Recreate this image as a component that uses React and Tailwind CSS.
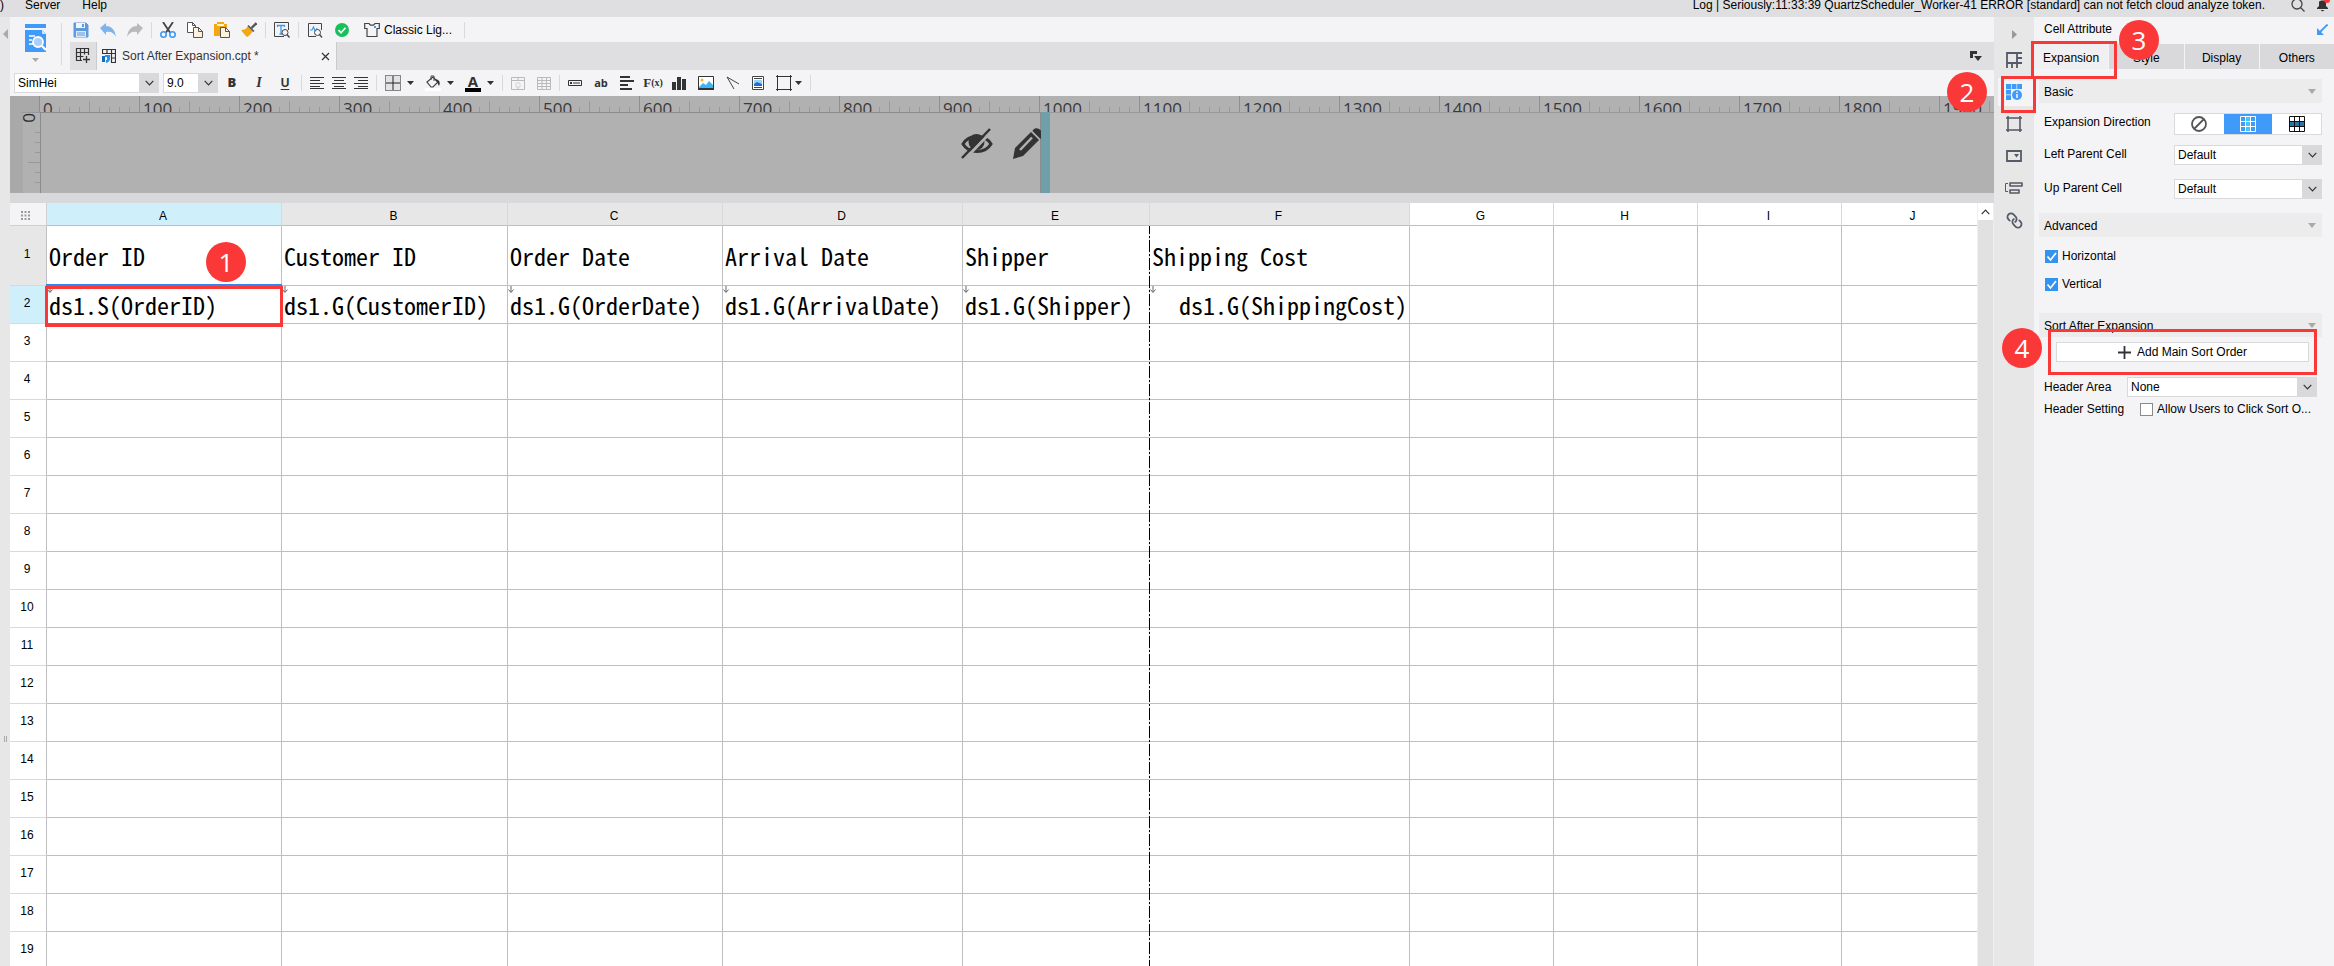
import React, { useState } from 'react';
import { Link as LinkIcon } from 'lucide-react';

const COLUMNS = [
  { name: 'A', width: 235, title: 'Order ID', field: 'ds1.S(OrderID)' },
  { name: 'B', width: 226, title: 'Customer ID', field: 'ds1.G(CustomerID)' },
  { name: 'C', width: 215, title: 'Order Date', field: 'ds1.G(OrderDate)' },
  { name: 'D', width: 240, title: 'Arrival Date', field: 'ds1.G(ArrivalDate)' },
  { name: 'E', width: 187, title: 'Shipper', field: 'ds1.G(Shipper)' },
  { name: 'F', width: 260, title: 'Shipping Cost', field: 'ds1.G(ShippingCost)', alignRight: true },
  { name: 'G', width: 144 },
  { name: 'H', width: 144 },
  { name: 'I', width: 144 },
  { name: 'J', width: 144 },
];

const EMPTY_ROWS = Array.from({ length: 17 }, (_, i) => i + 3);
const RULER_MARKS = Array.from({ length: 20 }, (_, i) => i * 100);

/* ---------- small shared pieces ---------- */

const Icon = ({ w = 16, h = 16, children, className = '' }) => (
  <svg width={w} height={h} viewBox={`0 0 ${w} ${h}`} fill="none" className={`shrink-0 ${className}`} aria-hidden="true">
    {children}
  </svg>
);

const ToolButton = ({ label, children, className = '' }) => (
  <button type="button" aria-label={label} className={`flex shrink-0 items-center justify-center ${className}`}>
    {children}
  </button>
);

const Separator = ({ className = 'mx-2' }) => <span className={`h-4 w-px shrink-0 bg-[#d9d9dc] ${className}`} />;

const Caret = ({ color = '#333', className = '' }) => (
  <Icon w={7} h={4} className={className}>
    <path d="M0 0h7L3.500 4z" fill={color} />
  </Icon>
);

const Select = ({ id, label, options, className = '' }) => (
  <div className={`relative flex h-5 ${className}`}>
    <select
      id={id}
      aria-label={label}
      className="h-5 w-full appearance-none border border-[#d9d9dc] bg-white pl-[3px] pr-5 text-xs leading-4 text-black outline-none"
    >
      {options.map((o) => (
        <option key={o}>{o}</option>
      ))}
    </select>
    <span className="pointer-events-none absolute inset-y-0 right-0 flex w-5 items-center justify-center bg-[#d9d9dc]">
      <Icon w={9} h={6}>
        <path d="M.7 .8l3.800 4 3.800-4" stroke="#333" strokeWidth="1.200" />
      </Icon>
    </span>
  </div>
);

const Marker = ({ children, className }) => (
  <span
    className={`absolute z-20 flex size-10 items-center justify-center rounded-full bg-[#fb3838] font-['Open_Sans',sans-serif] text-[26px] leading-none text-white ${className}`}
  >
    {children}
  </span>
);

const Highlight = ({ className }) => (
  <span className={`pointer-events-none absolute z-10 border-3 border-[#fb3838] ${className}`} />
);

/* ---------- top ---------- */

const MenuBar = () => (
  <header className="flex h-[17px] shrink-0 items-start overflow-hidden bg-[#dfdfe1] leading-[10px]">
    <span className="w-[25px]">)</span>
    <nav className="flex gap-[22px]">
      <button type="button">Server</button>
      <button type="button">Help</button>
    </nav>
    <div className="ml-auto flex items-start pr-1">
      <span className="mr-[26px] whitespace-nowrap">
        Log | Seriously:11:33:39 QuartzScheduler_Worker-41 ERROR [standard] can not fetch cloud analyze token.
      </span>
      <button type="button" aria-label="Search" className="mr-3">
        <Icon w={14} h={12}>
          <circle cx="6" cy="4" r="5" stroke="#444" strokeWidth="1.300" />
          <path d="M9.500 7.500l4 4" stroke="#444" strokeWidth="1.300" />
        </Icon>
      </button>
      <button type="button" aria-label="Notifications">
        <Icon w={13} h={12}>
          <path d="M0 9V8l2-2V2c0-2 7-2 7 0v4l2 2v1zM3.500 10h4l-2 1.500z" fill="#333" />
          <circle cx="10" cy="0" r="3" fill="#f33" />
        </Icon>
      </button>
    </div>
  </header>
);

const QuickTools = () => (
  <div className="flex h-[25px] items-center pl-[11px]">
    <div className="flex items-center gap-[11px]">
      <ToolButton label="Save">
        <Icon>
          <path d="M1 1h12l2 2v12H1z" fill="#5f9bdc" stroke="#5f9bdc" strokeLinejoin="round" />
          <path d="M3 1h9v5H3z" fill="#f4f4f7" />
          <path d="M9 2h2v3H9z" fill="#5f9bdc" />
          <path d="M3 9h10v6H3z" fill="#dbe9f8" />
          <path d="M4 11h8M4 13h8" stroke="#5f9bdc" />
        </Icon>
      </ToolButton>
      <ToolButton label="Undo">
        <Icon>
          <path d="M0 6l6-5v3c6 0 9 4 10 11-2-4-5-6-10-5v3z" fill="#7fb3ec" />
        </Icon>
      </ToolButton>
      <ToolButton label="Redo">
        <Icon>
          <path d="M16 6l-6-5v3C4 4 1 8 0 15c2-4 5-6 10-5v3z" fill="#b9b9bb" />
        </Icon>
      </ToolButton>
    </div>
    <Separator />
    <div className="flex items-center gap-[11px]">
      <ToolButton label="Cut">
        <Icon>
          <path d="M3 0l7 10.500M13 0L6 10.500" stroke="#444" strokeWidth="1.800" />
          <circle cx="3.500" cy="12.500" r="2.700" stroke="#3f9af0" strokeWidth="1.600" />
          <circle cx="12.500" cy="12.500" r="2.700" stroke="#3f9af0" strokeWidth="1.600" />
        </Icon>
      </ToolButton>
      <ToolButton label="Copy">
        <Icon>
          <path d="M.5 .5h5l3 3v7h-8z" fill="#fff" stroke="#555" />
          <path d="M5.500 .5v3h3" stroke="#555" />
          <path d="M6.500 5.500h5l4 4v6h-9z" fill="#fdf3dc" stroke="#555" />
          <path d="M11.500 5.500v4h4" stroke="#555" />
        </Icon>
      </ToolButton>
      <ToolButton label="Paste">
        <Icon>
          <path d="M0 2h3V0h7v2h3v12H0z" fill="#f3a80e" />
          <path d="M3 2h7v2H3z" fill="#fff3d4" />
          <path d="M6.500 5.500h5l4 4v6h-9z" fill="#fdf3dc" stroke="#555" />
          <path d="M11.500 5.500v4h4" stroke="#555" />
        </Icon>
      </ToolButton>
      <ToolButton label="Format painter">
        <Icon>
          <path d="M15.500 1L10.500 6" stroke="#555" strokeWidth="2.400" />
          <path d="M0 8c3 0 5-1 7-4l5 5c-2 3-4 5-6 6-1-1-4-4-6-7z" fill="#f3a80e" />
          <path d="M7 3.500l6 6" stroke="#555" strokeWidth="1.500" />
        </Icon>
      </ToolButton>
    </div>
    <Separator />
    <ToolButton label="Find text">
      <Icon>
        <path d="M10 14.500H.5v-14h14V8" stroke="#444" />
        <path d="M3.500 5V3.500h7V5M7 4v8M5.500 12h3" stroke="#3f9af0" strokeWidth="1.300" />
        <circle cx="11" cy="10.500" r="3" fill="#f4f4f7" stroke="#444" />
        <path d="M13 12.500l2.500 3" stroke="#444" strokeWidth="1.300" />
      </Icon>
    </ToolButton>
    <Separator />
    <div className="flex items-center gap-[11px]">
      <ToolButton label="Performance">
        <Icon>
          <path d="M9 14.500H1.500v-13h13V8" stroke="#444" />
          <path d="M3 8h2l1.500-3 2 5L10 6" stroke="#3f9af0" strokeWidth="1.200" />
          <circle cx="10.500" cy="10.500" r="3" fill="#f4f4f7" stroke="#444" />
          <path d="M12.500 12.500l2.500 3" stroke="#444" strokeWidth="1.300" />
        </Icon>
      </ToolButton>
      <ToolButton label="Check">
        <Icon>
          <circle cx="8" cy="8" r="7" fill="#16c15c" />
          <path d="M4.500 8.200l2.500 2.500 4.500-5" stroke="#fff" strokeWidth="1.700" />
        </Icon>
      </ToolButton>
      <button type="button" className="flex items-center gap-1 whitespace-nowrap pl-[3px]">
        <Icon>
          <path d="M.7 1.500h4.300l1.500 1.700h3L11 1.500h4.300v5h-2.300v8H3v-8H.7z" stroke="#444" strokeWidth="1.200" />
          <path d="M10 4h2v2h-2z" fill="#3f9af0" />
        </Icon>
        Classic Lig...
      </button>
    </div>
    <Separator className="mx-3" />
  </div>
);

const FileTabs = () => (
  <div className="ml-2 flex h-7 items-stretch bg-[#dfdfe1]">
    <ToolButton label="New sheet" className="w-[26px]">
      <Icon>
        <path d="M7 12.500H1.500v-12h12V7M1.500 4.500h12M1.500 8.500h7M5.500 .5v12M9.500 .5v6" stroke="#333" strokeWidth="1.200" />
        <path d="M11.500 8v7M8 11.500h7" stroke="#333" strokeWidth="1.300" />
      </Icon>
    </ToolButton>
    <div className="flex w-[241px] items-center border-x border-[#cbcbcd] bg-[#f4f4f7] pl-[5px] pr-[5px] text-[#333]">
      <Icon w={14} h={14}>
        <path d="M.5 5V.5h13v13H9M.5 4.500h13M9 9h4.500M5 .5v4M9.500 .5v13" stroke="#333" strokeWidth="1.200" />
        <path d="M0 7h3v6H0z" fill="#1769b5" />
        <path d="M3 6h5v3c0 3-1 4-4 5v-3h1V8H3z" fill="#2f8fe0" />
      </Icon>
      <span className="ml-[6px] whitespace-nowrap">Sort After Expansion.cpt *</span>
      <ToolButton label="Close tab" className="ml-auto size-3">
        <Icon w={9} h={9}>
          <path d="M1 1l7 7M8 1L1 8" stroke="#333" strokeWidth="1.200" />
        </Icon>
      </ToolButton>
    </div>
    <ToolButton label="Tab list" className="ml-auto mr-3">
      <Icon w={12} h={10}>
        <path d="M0 0h7v3H3v4H0z" fill="#333" />
        <path d="M4 5h8l-4 5z" fill="#333" />
      </Icon>
    </ToolButton>
  </div>
);

const FormatBar = () => (
  <div className="flex h-[26px] shrink-0 items-center pl-1">
    <Select id="font" label="Font" options={['SimHei']} className="w-[145px]" />
    <Select id="size" label="Font size" options={['9.0']} className="ml-1 w-[55px]" />
    <ToolButton label="Bold" className="ml-[6px] w-4 font-['Open_Sans',sans-serif] text-[13px] font-extrabold text-[#333]">B</ToolButton>
    <ToolButton label="Italic" className="ml-[11px] w-4 font-['Liberation_Serif',serif] text-sm font-bold italic text-[#333]">I</ToolButton>
    <ToolButton label="Underline" className="ml-[10px] w-4 text-xs font-bold text-[#333] underline underline-offset-2">U</ToolButton>
    <Separator />
    <div className="flex gap-2">
      <ToolButton label="Align left">
        <Icon w={14} h={12}>
          <path d="M0 .5h14M0 3.500h10M0 6.500h14M0 9.500h10M0 11.500h14" stroke="#333" />
        </Icon>
      </ToolButton>
      <ToolButton label="Align center">
        <Icon w={14} h={12}>
          <path d="M0 .5h14M2 3.500h10M0 6.500h14M2 9.500h10M0 11.500h14" stroke="#333" />
        </Icon>
      </ToolButton>
      <ToolButton label="Align right">
        <Icon w={14} h={12}>
          <path d="M0 .5h14M4 3.500h10M0 6.500h14M4 9.500h10M0 11.500h14" stroke="#333" />
        </Icon>
      </ToolButton>
    </div>
    <Separator />
    <div className="flex gap-[11px]">
      <ToolButton label="Borders" className="gap-[6px]">
        <Icon>
          <path d="M.5 .5h15v15H.5z" fill="#e3e3e6" stroke="#222" strokeDasharray="1 1" />
          <path d="M8 1v14M1 8h14" stroke="#222" />
        </Icon>
        <Caret />
      </ToolButton>
      <ToolButton label="Fill color" className="gap-[6px]">
        <Icon>
          <path d="M2 7l6-5 5 5-5 5H6z" stroke="#444" strokeWidth="1.200" fill="#f4f4f7" />
          <path d="M6 5V1h3v5" stroke="#444" />
          <path d="M9 4c5 0 7 3 5 7-1-1-1-3-2-4z" fill="#333" />
          <path d="M0 13h16v3H0z" fill="#fff" />
        </Icon>
        <Caret />
      </ToolButton>
      <ToolButton label="Font color" className="gap-[6px]">
        <span className="flex w-4 flex-col items-center border-b-4 border-black font-['Open_Sans',sans-serif] text-[15px] font-bold leading-[13px] text-[#333]">A</span>
        <Caret />
      </ToolButton>
    </div>
    <Separator />
    <div className="flex gap-3">
      <ToolButton label="Merge cells">
        <Icon w={14} h={13}>
          <path d="M.5 .5h13v12H.5zM.5 3.500h13M7 .5v3M7 10v3" stroke="#b9b9bb" />
          <path d="M5 6h4v4H5z" stroke="#d4d4d6" />
        </Icon>
      </ToolButton>
      <ToolButton label="Unmerge cells">
        <Icon w={14} h={13}>
          <path d="M.5 .5h13v12H.5zM.5 3.500h13M.5 6.500h13M.5 9.500h13M5 .5v12M9.500 .5v12" stroke="#b9b9bb" />
        </Icon>
      </ToolButton>
    </div>
    <Separator />
    <div className="flex items-center gap-3">
      <ToolButton label="Text field">
        <Icon w={14} h={6}>
          <path d="M.5 .5h13v5H.5z" stroke="#333" />
          <path d="M2 2h2v2H2z" fill="#333" />
          <path d="M5 3h7" stroke="#333" />
        </Icon>
      </ToolButton>
      <ToolButton label="Insert text" className="w-[14px] font-['Open_Sans',sans-serif] text-[11px] font-bold text-[#333]">ab</ToolButton>
      <ToolButton label="Rich text">
        <Icon w={14} h={14}>
          <path d="M0 1h10M0 5h14M0 9h8M0 13h12" stroke="#333" strokeWidth="2" />
        </Icon>
      </ToolButton>
      <ToolButton label="Insert formula" className="w-[14px] font-['Liberation_Serif',serif] text-[13px] font-bold text-[#333]">
        F<span className="text-[10px]">(x)</span>
      </ToolButton>
      <ToolButton label="Insert chart">
        <Icon w={14} h={14}>
          <path d="M0 6h4v8H0zM5 1h4v13H5zM10 3h4v11h-4z" fill="#333" />
        </Icon>
      </ToolButton>
      <ToolButton label="Insert picture">
        <Icon w={16} h={14}>
          <path d="M.5 .5h15v13H.5z" fill="#fff" stroke="#333" />
          <circle cx="4" cy="4" r="1.500" fill="#f9b632" />
          <path d="M1 11l4-4 3 2 3-4 4 4v3H1z" fill="#3db5f2" />
          <path d="M0 13h16" stroke="#333" strokeWidth="2" />
        </Icon>
      </ToolButton>
      <ToolButton label="Slash header">
        <Icon w={14} h={14}>
          <path d="M1 1l12 7M1 1l7 12" stroke="#444" />
        </Icon>
      </ToolButton>
      <ToolButton label="Sub report">
        <Icon w={12} h={14}>
          <path d="M.5 .5h11v13H.5z" fill="#fff" stroke="#444" />
          <path d="M2 2.500h8M2 11.500h8" stroke="#444" />
          <path d="M2 4h8v6H2z" fill="#9bd2fa" />
          <path d="M2 10V8l3-2 5 2v2z" fill="#1b70c9" />
        </Icon>
      </ToolButton>
      <ToolButton label="Widget" className="gap-[3px]">
        <Icon>
          <path d="M1.500 0v16M14.500 0v16M0 1.500h16M0 14.500h16" stroke="#333" />
        </Icon>
        <Caret />
      </ToolButton>
    </div>
    <Separator className="mx-2" />
  </div>
);

/* ---------- canvas ---------- */

const HorizontalRuler = () => (
  <div className="flex h-4 overflow-hidden bg-[#b1b1b1]">
    <div className="w-[29px] shrink-0 bg-[#a9a9a9]" />
    {RULER_MARKS.map((mark) => (
      <div key={mark} className="relative h-4 w-[100px] shrink-0 border-l border-[#8f8f8f]">
        <svg width="99" height="16" className="absolute" aria-hidden="true">
          <path
            d="M19.500 11v5M29.500 11v5M39.500 11v5M49.500 5v11M59.500 11v5M69.500 11v5M79.500 11v5M89.500 11v5"
            stroke="#999"
          />
        </svg>
        <span className="relative ml-[3px] block h-4 w-fit overflow-hidden bg-[#b1b1b1] font-['Open_Sans',sans-serif] text-[17px] leading-[25px] text-[#3a3a3a]">
          {mark}
        </span>
      </div>
    ))}
  </div>
);

const PreviewPane = () => (
  <section className="shrink-0 bg-[#b1b1b1]">
    <HorizontalRuler />
    <div className="flex h-[81px]">
      <div className="relative w-[31px] shrink-0 border-r border-[#8b8b8b] bg-gradient-to-r from-[#a9a9a9] from-45% to-[#b1b1b1] to-45%">
        <svg width="30" height="81" aria-hidden="true">
          <path
            d="M12 .5h18M25 20.500h5M25 30.500h5M25 40.500h5M18 50.500h12M25 60.500h5M25 70.500h5"
            stroke="#999"
          />
          <text x="1" y="-13" transform="rotate(90)" fontFamily="Open Sans" fontSize="17" fill="#2c2c2c">0</text>
        </svg>
      </div>
      <div className="flex w-[1000px] shrink-0 items-start justify-end gap-5 border-r border-t border-[#8b8b8b] pt-[15px]">
        <ToolButton label="Hide preview">
          <Icon w={32} h={31}>
            <path d="M2 16c6-10 22-10 28 0-6 10-22 10-28 0z" stroke="#333" strokeWidth="3" />
            <circle cx="15.500" cy="14" r="8" fill="#333" />
            <path d="M3 32L31 3" stroke="#b1b1b1" strokeWidth="3" />
            <path d="M1 30L29 1" stroke="#333" strokeWidth="2.500" />
          </Icon>
        </ToolButton>
        <ToolButton label="Edit" className="-mr-[3px]">
          <Icon w={30} h={31}>
            <path d="M0 31l2-11L18 4l8 8L10 28z" fill="#333" />
            <path d="M20 2c4-5 12 2 9 7l-1.500 2L19.500 3z" fill="#333" />
            <path d="M7 22L19 9.500" stroke="#b1b1b1" strokeWidth="2.500" />
            <path d="M18.500 3.500l8 8" stroke="#b1b1b1" strokeWidth="1" />
          </Icon>
        </ToolButton>
      </div>
      <div className="w-[9px] bg-[#6f9faa]" />
      <div className="flex-1 border-t border-[#999]" />
    </div>
  </section>
);

const ExpandArrow = () => (
  <Icon w={6} h={8} className="absolute left-0 top-0">
    <path d="M3 0v6M.5 3.500L3 6.500l2.500-3" stroke="#666" />
  </Icon>
);

const Sheet = () => (
  <div className="flex min-h-0 flex-1">
    <div className="relative min-w-0 flex-1 overflow-hidden bg-white">
      <table className="w-full min-w-[1976px] table-fixed border-separate border-spacing-0">
        <colgroup>
          <col className="w-[37px]" />
          {COLUMNS.map((c) => (
            <col key={c.name} style={{ width: c.width }} />
          ))}
        </colgroup>
        <thead>
          <tr className="h-[23px]">
            <th aria-label="Select all" className="border-b border-r border-[#d0d0d2] bg-[#f4f4f7] p-0 pr-[5px] pt-[3px]">
              <Icon w={9} h={9} className="mx-auto">
                <path d="M0 1h9M0 4.500h9M0 8h9" stroke="#999" strokeWidth="2" strokeDasharray="2 1.500" />
              </Icon>
            </th>
            {COLUMNS.map((c) => (
              <th
                key={c.name}
                className={`border-b border-r border-b-[#bfbfc1] border-r-[#d9d9dc] p-0 pr-0.5 pt-[3px] font-normal ${
                  c.name === 'A' ? 'bg-[#cff0fb]' : c.title ? 'bg-[#e7e7e7]' : 'bg-white'
                }`}
              >
                {c.name}
              </th>
            ))}
          </tr>
        </thead>
        <tbody>
          <tr className="h-[60px]">
            <th className="border-b border-r border-b-[#d9d9dc] border-r-[#bfbfc1] bg-[#e7e7e7] p-0 pb-[3px] pr-0.5 font-normal">1</th>
            {COLUMNS.map((c) => (
              <td
                key={c.name}
                className="border-b border-r border-[#bfbfc1] p-0 pl-0.5 pt-px font-['Noto_Sans_CJK_SC',sans-serif] text-2xl leading-8 whitespace-nowrap [font-feature-settings:'hwid']"
              >
                {c.title}
              </td>
            ))}
          </tr>
          <tr className="h-[38px]">
            <th className="border-b border-r border-b-[#d9d9dc] border-r-[#bfbfc1] bg-[#cff0fb] p-0 pb-[3px] pr-0.5 font-normal">2</th>
            {COLUMNS.map((c) => (
              <td
                key={c.name}
                className={`relative border-b border-r border-[#bfbfc1] p-0 px-0.5 pt-px font-['Noto_Sans_CJK_SC',sans-serif] text-2xl leading-8 whitespace-nowrap [font-feature-settings:'hwid'] ${
                  c.alignRight ? 'text-right' : ''
                }`}
              >
                {c.field && <ExpandArrow />}
                {c.field}
                {c.name === 'A' && (
                  <>
                    <span className="absolute -inset-x-px -top-0.5 -bottom-0.5 border-2 border-[#3585ee]" />
                    <Highlight className="-left-0.5 -right-0.5 top-0 -bottom-1" />
                  </>
                )}
              </td>
            ))}
          </tr>
          {EMPTY_ROWS.map((n) => (
            <tr key={n} className="h-[38px]">
              <th className="border-b border-r border-b-[#d9d9dc] border-r-[#bfbfc1] p-0 pb-[3px] pr-0.5 font-normal">{n}</th>
              {COLUMNS.map((c) => (
                <td key={c.name} className="border-b border-r border-[#bfbfc1] p-0" />
              ))}
            </tr>
          ))}
        </tbody>
      </table>
      {/* page break */}
      <svg width="1" height="100%" className="absolute left-[1139px] top-[23px]" aria-hidden="true">
        <path d="M.5 0v1200" stroke="#ddd" />
        <path d="M.5 0v1200" stroke="#000" strokeDasharray="12 2 2 2" strokeDashoffset="4" />
      </svg>
      <Marker className="left-[196px] top-[39px]">1</Marker>
    </div>
    <div className="flex w-[17px] shrink-0 flex-col border-x border-[#efeff1] bg-[#e1e1e1]">
      <ToolButton label="Scroll up" className="h-[17px] bg-white">
        <Icon w={9} h={6}>
          <path d="M.7 5.200l3.800-4 3.800 4" stroke="#333" strokeWidth="1.200" />
        </Icon>
      </ToolButton>
    </div>
  </div>
);

/* ---------- right side ---------- */

const SideStrip = () => (
  <div className="flex w-10 shrink-0 flex-col bg-[#e7e7e8]">
    <button type="button" aria-label="Collapse panel" className="flex h-[27px] items-center justify-center pt-2">
      <Icon w={5} h={9}>
        <path d="M0 0l5 4.500L0 9z" fill="#999" />
      </Icon>
    </button>
    <ToolButton label="Cell element" className="h-8">
      <Icon>
        <path d="M1 16V1h15M11 1v10H1M11 6h5M11 11h5M6 11v5M11 11v5" stroke="#555a66" strokeWidth="1.800" />
      </Icon>
    </ToolButton>
    <div className="relative flex h-8 items-center justify-end">
      <ToolButton label="Cell attribute" className="h-7 w-9 bg-[#f4f4f7]">
        <Icon className="mr-1">
          <path
            d="M0 0h5v5H0zM5.700 0h4.800v5H5.700zM11.200 0H16v5h-4.800zM0 5.700h5v4.800H0zM0 11.200h5V16H0z"
            fill="#3f9af8"
          />
          <circle cx="11" cy="11" r="5.700" fill="#f4f4f7" />
          <circle cx="11" cy="11" r="5" fill="#3f9af8" />
          <path d="M11 7.500V9M11 10v4" stroke="#f4f4f7" strokeWidth="1.600" />
        </Icon>
      </ToolButton>
      <Highlight className="left-[7px] top-0 h-[37px] w-[35px]" />
      <Marker className="-left-[47px] -top-1">2</Marker>
    </div>
    <ToolButton label="Float element" className="h-8">
      <Icon>
        <path d="M2 0v16M14 0v16M0 2h16M0 14h16" stroke="#555a66" strokeWidth="1.600" />
      </Icon>
    </ToolButton>
    <ToolButton label="Widget settings" className="h-8">
      <Icon>
        <path d="M1 3h14v10H1z" stroke="#555a66" strokeWidth="1.800" />
        <path d="M8 6h5l-2.500 3.500z" fill="#555a66" />
      </Icon>
    </ToolButton>
    <ToolButton label="Condition attribute" className="h-8">
      <Icon w={18}>
        <path d="M3 3.500H.5v8H3" stroke="#555a66" />
        <path d="M5 3h12v3H5zM5 10h9v3H5z" stroke="#555a66" strokeWidth="1.600" strokeLinejoin="round" />
      </Icon>
    </ToolButton>
    <ToolButton label="Hyperlink" className="h-8">
      <LinkIcon size={17} strokeWidth={2.5} className="rotate-90 text-[#555a66]" />
    </ToolButton>
  </div>
);

const SectionTitle = ({ children, className = '' }) => (
  <button
    type="button"
    className={`ml-[5px] mr-3 flex h-6 items-center justify-between bg-[#ececed] pl-[5px] pr-[6px] pt-px text-left ${className}`}
  >
    {children}
    <Icon w={8} h={5}>
      <path d="M0 0h8L4 5z" fill="#aaa" />
    </Icon>
  </button>
);

const CheckBox = ({ id, label, defaultChecked = false }) => (
  <div className="flex items-center gap-1">
    <span className="relative size-[13px] shrink-0">
      <input
        id={id}
        type="checkbox"
        defaultChecked={defaultChecked}
        className="peer block size-[13px] appearance-none border border-[#8a8a8c] bg-white checked:border-[#3393f0] checked:bg-[#3393f0]"
      />
      <Icon w={13} h={13} className="pointer-events-none absolute inset-0 hidden peer-checked:block">
        <path d="M2.500 6.500l3 3.500L11 3" stroke="#fff" strokeWidth="1.700" />
      </Icon>
    </span>
    <label htmlFor={id} className="whitespace-nowrap">{label}</label>
  </div>
);

const TABS = ['Expansion', 'Style', 'Display', 'Others'];

const AttributePanel = () => {
  const [tab, setTab] = useState('Expansion');
  const [direction, setDirection] = useState('vertical');

  const directionClass = (name) =>
    `flex flex-1 items-center justify-center ${direction === name ? 'bg-[#3f9af8]' : 'bg-white'}`;

  return (
    <aside className="flex w-[300px] shrink-0 flex-col bg-[#f4f4f7]">
      <div className="flex h-[27px] items-center justify-between pb-[3px] pl-[10px] pr-[6px]">
        <h2>Cell Attribute</h2>
        <ToolButton label="Detach panel">
          <Icon w={11} h={11}>
            <path d="M10.500 .5L3 8" stroke="#3f9af8" strokeWidth="1.800" />
            <path d="M0 4l7 7H0z" fill="#3f9af8" />
          </Icon>
        </ToolButton>
      </div>
      <div className="relative flex h-[25px] gap-px">
        {TABS.map((t) => (
          <button
            key={t}
            type="button"
            onClick={() => setTab(t)}
            className={`flex-1 pt-0.5 ${tab === t ? 'bg-[#f0f0f2]' : 'bg-[#d9d9dc]'}`}
          >
            {t}
          </button>
        ))}
        <Highlight className="-left-[3px] -top-[3px] h-[38px] w-[86px]" />
        <Marker className="-top-6 left-[85px]">3</Marker>
      </div>

      <SectionTitle className="mt-[10px]">Basic</SectionTitle>
      <div className="mt-[10px] flex items-start justify-between pl-[10px] pr-3">
        <span className="pt-px">Expansion Direction</span>
        <div className="flex h-[22px] w-[148px] border border-[#d9d9dc]">
          <button type="button" aria-label="None" onClick={() => setDirection('none')} className={directionClass('none')}>
            <Icon>
              <circle cx="8" cy="8" r="7" stroke="#555" strokeWidth="1.800" />
              <path d="M13 3L3 13" stroke="#555" strokeWidth="1.800" />
            </Icon>
          </button>
          <button type="button" aria-label="Vertical" onClick={() => setDirection('vertical')} className={directionClass('vertical')}>
            <Icon>
              <path d="M5 0h6v16H5z" fill="#3fc8ff" />
              <path d="M.5 .5h15v15H.5zM5.500 0v16M10.500 0v16M0 5.500h16M0 10.500h16" stroke="#fff" />
            </Icon>
          </button>
          <button type="button" aria-label="Horizontal" onClick={() => setDirection('horizontal')} className={directionClass('horizontal')}>
            <Icon>
              <path d="M0 5h16v6H0z" fill="#2b75a8" />
              <path d="M.5 .5h15v15H.5zM5.500 0v16M10.500 0v16M0 5.500h16M0 10.500h16" stroke="#111" />
            </Icon>
          </button>
        </div>
      </div>
      <div className="mt-[10px] flex items-start justify-between pl-[10px] pr-3">
        <label htmlFor="left-parent" className="pt-px">Left Parent Cell</label>
        <Select id="left-parent" options={['Default']} className="w-[148px]" />
      </div>
      <div className="mt-[14px] flex items-start justify-between pl-[10px] pr-3">
        <label htmlFor="up-parent" className="pt-px">Up Parent Cell</label>
        <Select id="up-parent" options={['Default']} className="w-[148px]" />
      </div>

      <SectionTitle className="mt-[14px]">Advanced</SectionTitle>
      <div className="mt-[11px] flex flex-col gap-3 pl-[11px]">
        <CheckBox id="horizontal" label="Horizontal" defaultChecked />
        <CheckBox id="vertical" label="Vertical" defaultChecked />
      </div>

      <SectionTitle className="mt-[21px]">Sort After Expansion</SectionTitle>
      <div className="relative mt-[5px] pl-[22px] pr-[25px]">
        <button type="button" className="flex h-5 w-full items-center justify-center gap-[6px] border border-[#d9d9dc] bg-white">
          <Icon w={13} h={13}>
            <path d="M6.500 0v13M0 6.500h13" stroke="#333" strokeWidth="1.800" />
          </Icon>
          Add Main Sort Order
        </button>
        <Highlight className="-top-[13px] left-[14px] right-[17px] h-[46px]" />
        <Marker className="-left-8 -top-[14px]">4</Marker>
      </div>
      <div className="mt-[15px] flex items-center pl-[10px] pr-[17px]">
        <label htmlFor="header-area" className="w-[83px] shrink-0">Header Area</label>
        <Select id="header-area" options={['None']} className="flex-1" />
      </div>
      <div className="mt-1 flex items-center pl-[10px]">
        <span className="w-24 shrink-0">Header Setting</span>
        <CheckBox id="allow-sort" label="Allow Users to Click Sort O..." />
      </div>
    </aside>
  );
};

const App = () => (
  <div className="flex h-screen flex-col overflow-hidden bg-[#f4f4f7] font-['Liberation_Sans',Arial,sans-serif] text-xs text-black">
    <MenuBar />
    <div className="flex min-h-0 flex-1">
      {/* collapsed left dock */}
      <div className="flex w-[10px] shrink-0 flex-col items-center bg-[#e7e7e8] pt-3">
        <Icon w={5} h={10}>
          <path d="M5 0v10L0 5z" fill="#aaa" />
        </Icon>
        <span className="mt-[697px] h-[6px] w-[3px] border-x border-[#aaa]" />
      </div>

      <main className="flex min-w-0 flex-1 flex-col">
        <div className="flex shrink-0">
          <div className="flex w-[51px] flex-col items-center pt-[7px]">
            <ToolButton label="Template preview">
              <Icon w={22} h={28}>
                <path d="M0 0h21v4H0zM0 6h17l4 4v18H0z" fill="#3f9af8" />
                <path d="M17 6v4h4z" fill="#cfe5fd" />
                <path d="M4 12h6M4 16h3M4 20h4" stroke="#fff" strokeWidth="1.600" />
                <circle cx="13" cy="18" r="5" fill="#a8d0fb" stroke="#fff" strokeWidth="1.800" />
                <path d="M17 22l4 4" stroke="#fff" strokeWidth="2.400" />
              </Icon>
            </ToolButton>
            <Caret color="#aaa" className="mt-[6px]" />
          </div>
          <span className="mt-[6px] h-[42px] w-px bg-[#d9d9dc]" />
          <div className="min-w-0 flex-1">
            <QuickTools />
            <FileTabs />
          </div>
        </div>
        <FormatBar />
        <PreviewPane />
        <div className="h-[10px] shrink-0 bg-[#d9d9dc]" />
        <Sheet />
      </main>

      <SideStrip />
      <AttributePanel />
    </div>
  </div>
);

export default App;
